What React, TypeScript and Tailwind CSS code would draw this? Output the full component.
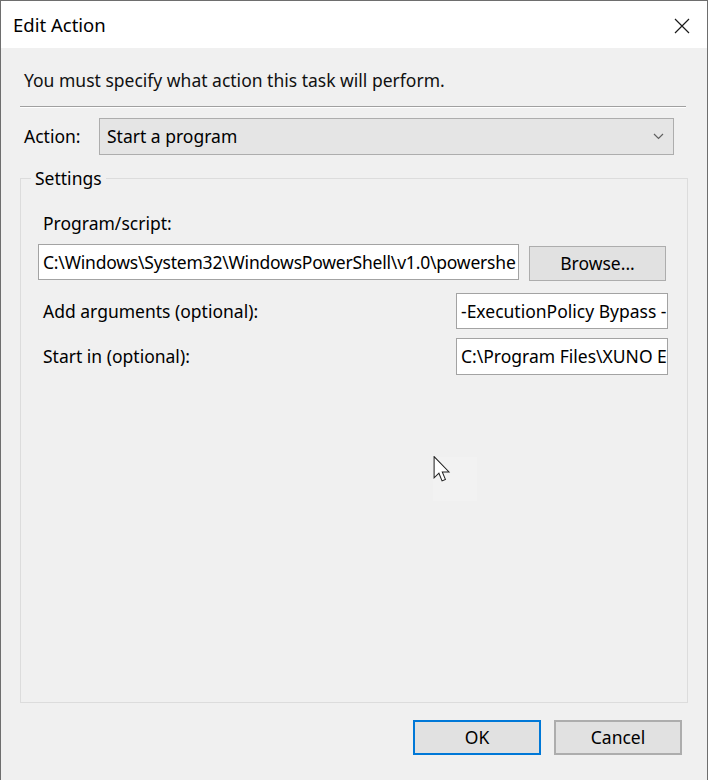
const font = { fontFamily: '"Noto Sans", "Open Sans", sans-serif' };

function CloseIcon() {
  return (
    <svg width="16" height="16" viewBox="0 0 16 16" className="text-[#1a1a1a]">
      <path d="M1 1 L15 15 M15 1 L1 15" stroke="currentColor" strokeWidth="1.2" fill="none" />
    </svg>
  );
}

function Chevron() {
  return (
    <svg width="11" height="7" viewBox="0 0 11 7" className="text-[#606060]">
      <path d="M1 1 L5.5 5.5 L10 1" stroke="currentColor" strokeWidth="1.2" fill="none" />
    </svg>
  );
}

function Cursor() {
  return (
    <svg width="19" height="28" viewBox="0 0 16 25">
      <path
        d="M0.5 0.5 L0.5 19.5 L4.8 15.4 L7.6 22.2 L10.6 20.9 L7.8 14.3 L13.8 14.3 Z"
        fill="white"
        stroke="#1f1f1f"
        strokeWidth="0.9"
        strokeLinejoin="miter"
      />
    </svg>
  );
}

function TextBox({ value, className }: { value: string; className: string }) {
  return (
    <div
      className={
        "h-[36px] bg-white border border-[#a3a3a3] pl-[4px] overflow-hidden whitespace-nowrap flex items-center text-black " +
        className
      }
    >
      {value}
    </div>
  );
}

export default function App() {
  return (
    <div className="w-[708px] h-[780px] overflow-hidden bg-[#f0f0f0] text-[17.5px]" style={font}>
      <div className="relative h-full border-x border-t border-[#6e6e6e] flex flex-col">
        {/* title bar */}
        <div className="h-[47px] bg-white flex items-center justify-between pt-[2px] pl-[12px] pr-[17px]">
          <span className="text-[18.5px] text-black leading-none">Edit Action</span>
          <CloseIcon />
        </div>

        <div className="flex-1 flex flex-col pl-[19px] pr-[19px]">
          <p className="mt-[20px] h-[24px] leading-[24px] pl-[4px] text-[#111]">
            You must specify what action this task will perform.
          </p>
          <div className="mt-[14px] mr-[2px] h-[2px] border-t border-[#a0a0a0] border-b border-b-white" />

          {/* action row */}
          <div className="mt-[10px] flex items-center">
            <span className="w-[79px] pl-[4px] text-black">Action:</span>
            <div className="flex-1 mr-[14px] h-[37px] bg-[#e5e5e5] border border-[#adadad] flex items-center justify-between pl-[7px] pr-[9px] text-black">
              <span>Start a program</span>
              <Chevron />
            </div>
          </div>

          {/* settings group */}
          <div className="relative mt-[23px] h-[525px] border border-[#dcdcdc]">
            <span className="absolute left-[10px] top-[-13px] px-[4px] bg-[#f0f0f0] leading-[24px] text-black">
              Settings
            </span>

            <div className="pt-[32px] pl-[17px] pr-[21px] flex flex-col">
              <span className="pl-[5px] h-[24px] leading-[24px] text-black">Program/script:</span>
              <div className="mt-[9px] flex items-start">
                <TextBox
                  value="C:\Windows\System32\WindowsPowerShell\v1.0\powershe"
                  className="w-[481px] tracking-[-0.2px]"
                />
                <button className="ml-[10px] mt-[2px] w-[137px] h-[35px] bg-[#e1e1e1] border border-[#adadad] text-black">
                  Browse...
                </button>
              </div>

              <div className="mt-[12px] flex items-center justify-between">
                <span className="pl-[5px] text-black">Add arguments (optional):</span>
                <TextBox value="-ExecutionPolicy Bypass -" className="w-[212px] mr-[-2px]" />
              </div>
              <div className="mt-[9px] flex items-center justify-between">
                <span className="pl-[5px] text-black">Start in (optional):</span>
                <TextBox value="C:\Program Files\XUNO E" className="w-[212px] h-[37px] mr-[-2px]" />
              </div>
            </div>
          </div>

          {/* buttons */}
          <div className="mt-[17px] flex justify-end gap-[13px] mr-[6px]">
            <button className="w-[128px] h-[35px] bg-[#e1e1e1] border-2 border-[#0078d7] text-black">
              OK
            </button>
            <button className="w-[128px] h-[35px] bg-[#e1e1e1] border-2 border-[#adadad] text-black">
              Cancel
            </button>
          </div>
        </div>

        {/* mouse pointer */}
        <div className="absolute left-[432px] top-[456px] w-[44px] h-[44px] bg-[#f2f2f2]" />
        <div className="absolute left-[432px] top-[455px]">
          <Cursor />
        </div>
      </div>
    </div>
  );
}
